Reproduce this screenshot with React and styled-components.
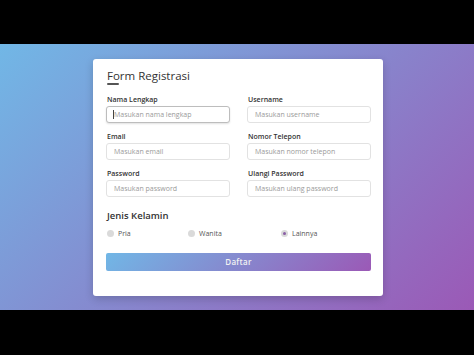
import styled, { createGlobalStyle } from "styled-components";

const GlobalStyle = createGlobalStyle`
  * {
    box-sizing: border-box;
  }
  body {
    margin: 0;
    background: #000;
    font-family: "Open Sans", "Liberation Sans", sans-serif;
  }
`;

const Screen = styled.div`
  width: 474px;
  height: 355px;
  padding: 44px 0 45px;
  background: #000;
`;

const Stage = styled.div`
  height: 266px;
  display: flex;
  align-items: center;
  justify-content: center;
  background: linear-gradient(135deg, #71b7e6, #9b59b6);
`;

const Card = styled.div`
  width: 290px;
  margin-left: 2px;
  padding: 9px 13px 25px;
  background: #fff;
  border-radius: 3px;
  box-shadow: 0 3px 8px rgba(0, 0, 0, 0.18);
`;

const Title = styled.h1`
  position: relative;
  margin: 0 0 11px 1px;
  height: 16px;
  font-size: 11.5px;
  line-height: 16px;
  font-weight: 500;
  color: #333;

  &::before {
    content: "";
    position: absolute;
    left: 0;
    bottom: -1px;
    width: 12px;
    height: 1.5px;
    background: #555;
    border-radius: 1px;
  }
`;

const Grid = styled.div`
  display: grid;
  grid-template-columns: 124px 124px;
  column-gap: 17px;
  row-gap: 9px;
`;

const Field = styled.div`
  display: flex;
  flex-direction: column;
  gap: 1px;
`;

const Label = styled.label`
  padding-left: 1px;
  font-size: 7px;
  line-height: 10px;
  font-weight: 600;
  color: #333;
`;

const InputWrap = styled.div`
  position: relative;
`;

const Caret = styled.span`
  position: absolute;
  left: 7px;
  top: 4px;
  width: 1px;
  height: 9px;
  background: #444;
`;

const Input = styled.input`
  display: block;
  width: 100%;
  height: 17px;
  padding: 0 7px;
  border: 1px solid ${(p) => (p.$active ? "#bdbdbd" : "#e2e2e2")};
  border-radius: 3px;
  outline: none;
  font-family: inherit;
  font-size: 7px;
  color: #333;
  box-shadow: ${(p) => (p.$active ? "0 1px 2px rgba(0,0,0,0.12)" : "none")};

  &::placeholder {
    color: #9a9a9a;
  }
`;

const Section = styled.h2`
  margin: 12px 0 7px 1px;
  font-size: 9.5px;
  line-height: 13px;
  font-weight: 600;
  color: #333;
`;

const Options = styled.div`
  display: grid;
  grid-template-columns: 81px 93px auto;
  height: 10px;
  padding-left: 1px;
`;

const Option = styled.label`
  display: flex;
  align-items: center;
  gap: 4px;
  font-size: 7px;
  line-height: 10px;
  color: #555;
`;

const Dot = styled.span`
  position: relative;
  width: 7px;
  height: 7px;
  border-radius: 50%;
  background: #dadada;

  &::after {
    content: "";
    display: ${(p) => (p.$checked ? "block" : "none")};
    position: absolute;
    left: 2px;
    top: 2px;
    width: 3px;
    height: 3px;
    border-radius: 50%;
    background: #8a5fa6;
  }
`;

const Button = styled.button`
  display: block;
  width: 265px;
  height: 18px;
  margin-top: 14px;
  border: none;
  border-radius: 2px;
  background: linear-gradient(135deg, #71b7e6, #9b59b6);
  font-family: inherit;
  font-size: 8px;
  font-weight: 600;
  letter-spacing: 0.3px;
  color: #f2f2f2;
  cursor: pointer;
`;

const fields = [
  { label: "Nama Lengkap", placeholder: "Masukan nama lengkap", active: true },
  { label: "Username", placeholder: "Masukan username" },
  { label: "Email", placeholder: "Masukan email" },
  { label: "Nomor Telepon", placeholder: "Masukan nomor telepon" },
  { label: "Password", placeholder: "Masukan password" },
  { label: "Ulangi Password", placeholder: "Masukan ulang password" },
];

const genders = [
  { label: "Pria" },
  { label: "Wanita" },
  { label: "Lainnya", checked: true },
];

const App = () => {
  return (
    <>
      <GlobalStyle />
      <Screen>
        <Stage>
          <Card>
            <Title>Form Registrasi</Title>
            <Grid>
              {fields.map((f) => (
                <Field key={f.label}>
                  <Label>{f.label}</Label>
                  <InputWrap>
                    <Input $active={f.active} placeholder={f.placeholder} readOnly />
                    {f.active && <Caret />}
                  </InputWrap>
                </Field>
              ))}
            </Grid>
            <Section>Jenis Kelamin</Section>
            <Options>
              {genders.map((g) => (
                <Option key={g.label}>
                  <Dot $checked={g.checked} />
                  {g.label}
                </Option>
              ))}
            </Options>
            <Button>Daftar</Button>
          </Card>
        </Stage>
      </Screen>
    </>
  );
};

export default App;
